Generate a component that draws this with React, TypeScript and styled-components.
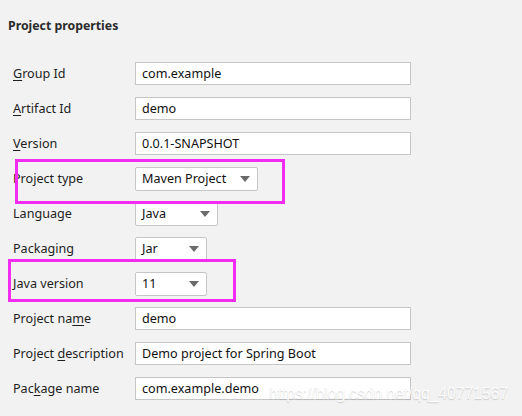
import React from "react";
import styled, { createGlobalStyle } from "styled-components";

const GlobalStyle = createGlobalStyle`
  html, body {
    margin: 0;
    padding: 0;
    background: #f2f2f2;
  }
  body {
    font-family: "Noto Sans", "Open Sans", sans-serif;
    font-size: 12.6px;
    color: #1e1e1e;
  }
`;

const Page = styled.div`
  position: relative;
  width: 522px;
  height: 416px;
  overflow: hidden;
  background: #f2f2f2;
  display: flex;
  flex-direction: column;
`;

const Title = styled.div`
  padding: 16px 0 0 8px;
  height: 20px;
  line-height: 20px;
  font-weight: 700;
  font-size: 12.3px;
  color: #2b2b2b;
`;

const Form = styled.div`
  display: flex;
  flex-direction: column;
  gap: 12px;
  padding: 26px 0 0 13px;
`;

const Row = styled.div`
  display: flex;
  align-items: center;
  height: 23px;
`;

const Label = styled.div`
  width: 122px;
  line-height: 23px;
  white-space: nowrap;

  u {
    text-decoration: underline;
    text-underline-offset: 2px;
  }
`;

const TextField = styled.div`
  box-sizing: border-box;
  width: 276px;
  height: 23px;
  line-height: 21px;
  padding: 0 6px;
  background: #fff;
  border: 1px solid #c6c6c6;
  color: #111;
`;

const Select = styled.div<{ $w: number }>`
  box-sizing: border-box;
  width: ${(p) => p.$w}px;
  height: 24px;
  padding: 0 6px;
  display: flex;
  align-items: center;
  justify-content: space-between;
  background: #fff;
  border: 1px solid #c6c6c6;
  border-radius: 2px;
  color: #111;
`;

const Arrow = styled.span`
  width: 0;
  height: 0;
  border-left: 5px solid transparent;
  border-right: 5px solid transparent;
  border-top: 6px solid #6b6b6b;
  margin-right: 1px;
`;

const Highlight = styled.div<{ $x: number; $y: number; $w: number; $h: number }>`
  position: absolute;
  left: ${(p) => p.$x}px;
  top: ${(p) => p.$y}px;
  width: ${(p) => p.$w}px;
  height: ${(p) => p.$h}px;
  box-sizing: border-box;
  border: 3px solid #f22cf2;
  pointer-events: none;
`;

const Watermark = styled.div`
  position: absolute;
  left: 269px;
  top: 385px;
  font-family: "Liberation Sans", Arial, sans-serif;
  font-size: 16px;
  letter-spacing: -0.2px;
  color: rgba(255, 255, 255, 0.92);
  text-shadow: 0 1px 1px rgba(150, 150, 150, 0.45);
  white-space: nowrap;
`;

type Field =
  | { label: React.ReactNode; value: string; kind: "text" }
  | { label: React.ReactNode; value: string; kind: "select"; width: number };

const fields: Field[] = [
  { label: <><u>G</u>roup Id</>, value: "com.example", kind: "text" },
  { label: <><u>A</u>rtifact Id</>, value: "demo", kind: "text" },
  { label: <><u>V</u>ersion</>, value: "0.0.1-SNAPSHOT", kind: "text" },
  { label: "Project type", value: "Maven Project", kind: "select", width: 123 },
  { label: "Language", value: "Java", kind: "select", width: 83 },
  { label: "Packaging", value: "Jar", kind: "select", width: 72 },
  { label: "Java version", value: "11", kind: "select", width: 72 },
  { label: <>Project na<u>m</u>e</>, value: "demo", kind: "text" },
  { label: <>Project <u>d</u>escription</>, value: "Demo project for Spring Boot", kind: "text" },
  { label: <>Pac<u>k</u>age name</>, value: "com.example.demo", kind: "text" },
];

export default function App() {
  return (
    <Page>
      <GlobalStyle />
      <Title>Project properties</Title>
      <Form>
        {fields.map((f, i) => (
          <Row key={i}>
            <Label>{f.label}</Label>
            {f.kind === "text" ? (
              <TextField>{f.value}</TextField>
            ) : (
              <Select $w={f.width}>
                <span>{f.value}</span>
                <Arrow />
              </Select>
            )}
          </Row>
        ))}
      </Form>
      <Highlight $x={15} $y={159} $w={270} $h={45} />
      <Highlight $x={8} $y={259} $w={228} $h={43} />
      <Watermark>https://blog.csdn.net/qq_40771567</Watermark>
    </Page>
  );
}
